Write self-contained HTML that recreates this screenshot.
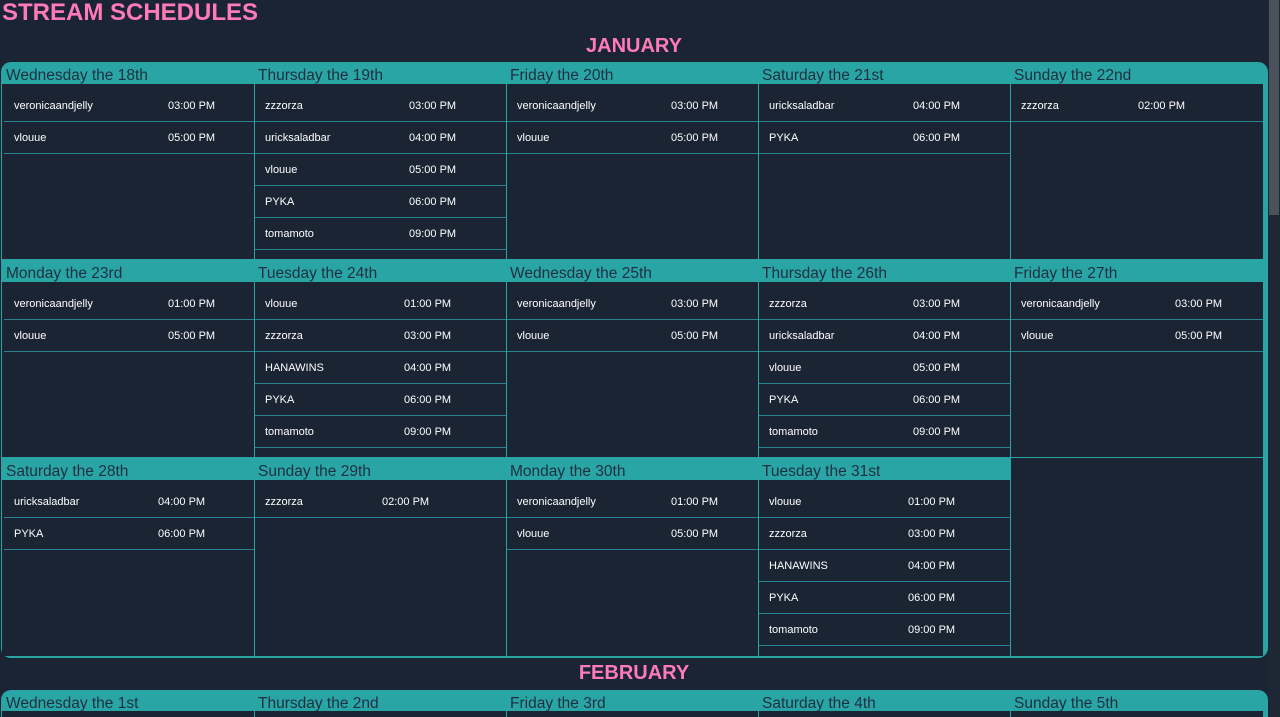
<!DOCTYPE html><html style="height:717px;overflow:hidden"><head><style>
body{margin:0;background:#1a2433;font-family:"Liberation Sans",sans-serif;width:1280px;height:717px;overflow:hidden;position:relative}
h1{margin:0;position:absolute;left:2px;top:-1px;color:#ff7ab8;font-size:24px;font-weight:bold}
.m{position:absolute;width:1268px;text-align:center;color:#ff7ab8;font-weight:bold;font-size:20px}
.c{position:absolute;left:1px;width:1267px;background:#2aa5a5;border-radius:10px}
.w{position:absolute;left:1px;height:197px;display:flex}
.col{width:252px;height:100%;display:flex;flex-direction:column}
.h{height:22px;line-height:27px;color:#1e3040;font-size:15.5px;padding-left:4px;white-space:nowrap;overflow:hidden}
.b{flex:1;background:#1a2433;margin-left:1px;padding-top:6px;box-sizing:border-box}
.r{height:31px;border-bottom:1px solid #2a8391;position:relative;color:#fff;font-size:11px;line-height:33px}
.r span{position:absolute;left:10px}.r i{font-style:normal;position:absolute;left:164px}
.t2 .r i{left:154px}.t3 .r i{left:127px}.t4 .r i{left:149px}
.f .b{margin-left:0;padding-left:2px}
.sb{position:absolute;right:0;top:0;width:12px;height:717px;background:#1e2835}
.th{position:absolute;right:1px;top:0;width:10px;height:215px;background:#4a525c}
</style></head><body>
<h1>STREAM SCHEDULES</h1>
<div class="m" style="top:35px">JANUARY</div>
<div class="c" style="top:62px;height:596px">
<div class="w" style="top:0">
<div class="col f"><div class="h">Wednesday the 18th</div><div class="b"><div class="r"><span>veronicaandjelly</span><i>03:00 PM</i></div><div class="r"><span>vlouue</span><i>05:00 PM</i></div></div></div>
<div class="col t2"><div class="h">Thursday the 19th</div><div class="b"><div class="r"><span>zzzorza</span><i>03:00 PM</i></div><div class="r"><span>uricksaladbar</span><i>04:00 PM</i></div><div class="r"><span>vlouue</span><i>05:00 PM</i></div><div class="r"><span>PYKA</span><i>06:00 PM</i></div><div class="r"><span>tomamoto</span><i>09:00 PM</i></div></div></div>
<div class="col"><div class="h">Friday the 20th</div><div class="b"><div class="r"><span>veronicaandjelly</span><i>03:00 PM</i></div><div class="r"><span>vlouue</span><i>05:00 PM</i></div></div></div>
<div class="col t2"><div class="h">Saturday the 21st</div><div class="b"><div class="r"><span>uricksaladbar</span><i>04:00 PM</i></div><div class="r"><span>PYKA</span><i>06:00 PM</i></div></div></div>
<div class="col t3" style="width:253px"><div class="h">Sunday the 22nd</div><div class="b"><div class="r"><span>zzzorza</span><i>02:00 PM</i></div></div></div>
</div>
<div class="w" style="top:198px">
<div class="col f"><div class="h">Monday the 23rd</div><div class="b"><div class="r"><span>veronicaandjelly</span><i>01:00 PM</i></div><div class="r"><span>vlouue</span><i>05:00 PM</i></div></div></div>
<div class="col t4"><div class="h">Tuesday the 24th</div><div class="b"><div class="r"><span>vlouue</span><i>01:00 PM</i></div><div class="r"><span>zzzorza</span><i>03:00 PM</i></div><div class="r"><span>HANAWINS</span><i>04:00 PM</i></div><div class="r"><span>PYKA</span><i>06:00 PM</i></div><div class="r"><span>tomamoto</span><i>09:00 PM</i></div></div></div>
<div class="col"><div class="h">Wednesday the 25th</div><div class="b"><div class="r"><span>veronicaandjelly</span><i>03:00 PM</i></div><div class="r"><span>vlouue</span><i>05:00 PM</i></div></div></div>
<div class="col t2"><div class="h">Thursday the 26th</div><div class="b"><div class="r"><span>zzzorza</span><i>03:00 PM</i></div><div class="r"><span>uricksaladbar</span><i>04:00 PM</i></div><div class="r"><span>vlouue</span><i>05:00 PM</i></div><div class="r"><span>PYKA</span><i>06:00 PM</i></div><div class="r"><span>tomamoto</span><i>09:00 PM</i></div></div></div>
<div class="col" style="width:253px"><div class="h">Friday the 27th</div><div class="b"><div class="r"><span>veronicaandjelly</span><i>03:00 PM</i></div><div class="r"><span>vlouue</span><i>05:00 PM</i></div></div></div>
</div>
<div class="w" style="top:396px;height:198px">
<div class="col f t2"><div class="h">Saturday the 28th</div><div class="b"><div class="r"><span>uricksaladbar</span><i>04:00 PM</i></div><div class="r"><span>PYKA</span><i>06:00 PM</i></div></div></div>
<div class="col t3"><div class="h">Sunday the 29th</div><div class="b"><div class="r"><span>zzzorza</span><i>02:00 PM</i></div></div></div>
<div class="col"><div class="h">Monday the 30th</div><div class="b"><div class="r"><span>veronicaandjelly</span><i>01:00 PM</i></div><div class="r"><span>vlouue</span><i>05:00 PM</i></div></div></div>
<div class="col t4"><div class="h">Tuesday the 31st</div><div class="b"><div class="r"><span>vlouue</span><i>01:00 PM</i></div><div class="r"><span>zzzorza</span><i>03:00 PM</i></div><div class="r"><span>HANAWINS</span><i>04:00 PM</i></div><div class="r"><span>PYKA</span><i>06:00 PM</i></div><div class="r"><span>tomamoto</span><i>09:00 PM</i></div></div></div>
<div class="col" style="width:253px"><div class="b"></div></div>
</div>
</div>
<div class="m" style="top:662px">FEBRUARY</div>
<div class="c" style="top:690px;height:27px;border-radius:10px 10px 0 0">
<div class="w" style="top:0;height:27px">
<div class="col f"><div class="h">Wednesday the 1st</div><div class="b"></div></div>
<div class="col"><div class="h">Thursday the 2nd</div><div class="b"></div></div>
<div class="col"><div class="h">Friday the 3rd</div><div class="b"></div></div>
<div class="col"><div class="h">Saturday the 4th</div><div class="b"></div></div>
<div class="col" style="width:253px"><div class="h">Sunday the 5th</div><div class="b"></div></div>
</div></div>
<div class="sb"><div class="th"></div></div>
</body></html>
